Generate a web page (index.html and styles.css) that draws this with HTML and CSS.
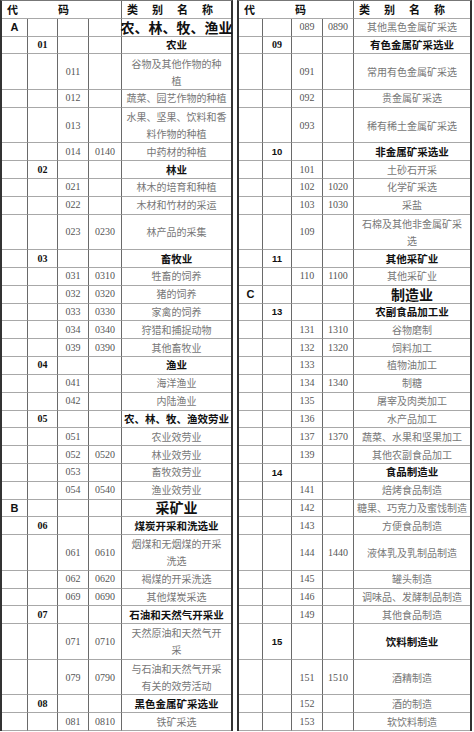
FILE: index.html
```html
<!DOCTYPE html>
<html lang="zh-CN">
<head>
<meta charset="utf-8">
<title>国民经济行业分类</title>
<link rel="stylesheet" href="styles.css">
</head>
<body>
<div class="page">
  <div class="half left">
    <div class="c hc"><span class="h1">代</span><span class="h2">码</span></div><div class="c n hn">类别名称</div>
    <div class="c l">A</div><div class="c"></div><div class="c"></div><div class="c"></div><div class="c n g">农、林、牧、渔业</div>
    <div class="c"></div><div class="c k">01</div><div class="c"></div><div class="c"></div><div class="c n s">农业</div>
    <div class="c d"></div><div class="c d"></div><div class="c d">011</div><div class="c d"></div><div class="c n d">谷物及其他作物的种<br>植</div>
    <div class="c"></div><div class="c"></div><div class="c">012</div><div class="c"></div><div class="c n">蔬菜、园艺作物的种植</div>
    <div class="c d"></div><div class="c d"></div><div class="c d">013</div><div class="c d"></div><div class="c n d">水果、坚果、饮料和香<br>料作物的种植</div>
    <div class="c"></div><div class="c"></div><div class="c">014</div><div class="c">0140</div><div class="c n">中药材的种植</div>
    <div class="c"></div><div class="c k">02</div><div class="c"></div><div class="c"></div><div class="c n s">林业</div>
    <div class="c"></div><div class="c"></div><div class="c">021</div><div class="c"></div><div class="c n">林木的培育和种植</div>
    <div class="c"></div><div class="c"></div><div class="c">022</div><div class="c"></div><div class="c n">木材和竹材的采运</div>
    <div class="c d"></div><div class="c d"></div><div class="c d">023</div><div class="c d">0230</div><div class="c n d">林产品的采集</div>
    <div class="c"></div><div class="c k">03</div><div class="c"></div><div class="c"></div><div class="c n s">畜牧业</div>
    <div class="c"></div><div class="c"></div><div class="c">031</div><div class="c">0310</div><div class="c n">牲畜的饲养</div>
    <div class="c"></div><div class="c"></div><div class="c">032</div><div class="c">0320</div><div class="c n">猪的饲养</div>
    <div class="c"></div><div class="c"></div><div class="c">033</div><div class="c">0330</div><div class="c n">家禽的饲养</div>
    <div class="c"></div><div class="c"></div><div class="c">034</div><div class="c">0340</div><div class="c n">狩猎和捕捉动物</div>
    <div class="c"></div><div class="c"></div><div class="c">039</div><div class="c">0390</div><div class="c n">其他畜牧业</div>
    <div class="c"></div><div class="c k">04</div><div class="c"></div><div class="c"></div><div class="c n s">渔业</div>
    <div class="c"></div><div class="c"></div><div class="c">041</div><div class="c"></div><div class="c n">海洋渔业</div>
    <div class="c"></div><div class="c"></div><div class="c">042</div><div class="c"></div><div class="c n">内陆渔业</div>
    <div class="c"></div><div class="c k">05</div><div class="c"></div><div class="c"></div><div class="c n s">农、林、牧、渔效劳业</div>
    <div class="c"></div><div class="c"></div><div class="c">051</div><div class="c"></div><div class="c n">农业效劳业</div>
    <div class="c"></div><div class="c"></div><div class="c">052</div><div class="c">0520</div><div class="c n">林业效劳业</div>
    <div class="c"></div><div class="c"></div><div class="c">053</div><div class="c"></div><div class="c n">畜牧效劳业</div>
    <div class="c"></div><div class="c"></div><div class="c">054</div><div class="c">0540</div><div class="c n">渔业效劳业</div>
    <div class="c l">B</div><div class="c"></div><div class="c"></div><div class="c"></div><div class="c n g">采矿业</div>
    <div class="c"></div><div class="c k">06</div><div class="c"></div><div class="c"></div><div class="c n s">煤炭开采和洗选业</div>
    <div class="c d"></div><div class="c d"></div><div class="c d">061</div><div class="c d">0610</div><div class="c n d">烟煤和无烟煤的开采<br>洗选</div>
    <div class="c"></div><div class="c"></div><div class="c">062</div><div class="c">0620</div><div class="c n">褐煤的开采洗选</div>
    <div class="c"></div><div class="c"></div><div class="c">069</div><div class="c">0690</div><div class="c n">其他煤炭采选</div>
    <div class="c"></div><div class="c k">07</div><div class="c"></div><div class="c"></div><div class="c n s">石油和天然气开采业</div>
    <div class="c d"></div><div class="c d"></div><div class="c d">071</div><div class="c d">0710</div><div class="c n d">天然原油和天然气开<br>采</div>
    <div class="c d"></div><div class="c d"></div><div class="c d">079</div><div class="c d">0790</div><div class="c n d">与石油和天然气开采<br>有关的效劳活动</div>
    <div class="c"></div><div class="c k">08</div><div class="c"></div><div class="c"></div><div class="c n s">黑色金属矿采选业</div>
    <div class="c"></div><div class="c"></div><div class="c">081</div><div class="c">0810</div><div class="c n">铁矿采选</div>
  </div>
  <div class="half right">
    <div class="c hc"><span class="h1">代</span><span class="h2">码</span></div><div class="c n hn">类别名称</div>
    <div class="c"></div><div class="c"></div><div class="c">089</div><div class="c">0890</div><div class="c n">其他黑色金属矿采选</div>
    <div class="c"></div><div class="c k">09</div><div class="c"></div><div class="c"></div><div class="c n s">有色金属矿采选业</div>
    <div class="c d"></div><div class="c d"></div><div class="c d">091</div><div class="c d"></div><div class="c n d">常用有色金属矿采选</div>
    <div class="c"></div><div class="c"></div><div class="c">092</div><div class="c"></div><div class="c n">贵金属矿采选</div>
    <div class="c d"></div><div class="c d"></div><div class="c d">093</div><div class="c d"></div><div class="c n d">稀有稀土金属矿采选</div>
    <div class="c"></div><div class="c k ks">10</div><div class="c"></div><div class="c"></div><div class="c n s">非金属矿采选业</div>
    <div class="c"></div><div class="c"></div><div class="c">101</div><div class="c"></div><div class="c n">土砂石开采</div>
    <div class="c"></div><div class="c"></div><div class="c">102</div><div class="c">1020</div><div class="c n">化学矿采选</div>
    <div class="c"></div><div class="c"></div><div class="c">103</div><div class="c">1030</div><div class="c n">采盐</div>
    <div class="c d"></div><div class="c d"></div><div class="c d">109</div><div class="c d"></div><div class="c n d">石棉及其他非金属矿采<br>选</div>
    <div class="c"></div><div class="c k ks">11</div><div class="c"></div><div class="c"></div><div class="c n s">其他采矿业</div>
    <div class="c"></div><div class="c"></div><div class="c">110</div><div class="c">1100</div><div class="c n">其他采矿业</div>
    <div class="c l">C</div><div class="c"></div><div class="c"></div><div class="c"></div><div class="c n g">制造业</div>
    <div class="c"></div><div class="c k ks">13</div><div class="c"></div><div class="c"></div><div class="c n s">农副食品加工业</div>
    <div class="c"></div><div class="c"></div><div class="c">131</div><div class="c">1310</div><div class="c n">谷物磨制</div>
    <div class="c"></div><div class="c"></div><div class="c">132</div><div class="c">1320</div><div class="c n">饲料加工</div>
    <div class="c"></div><div class="c"></div><div class="c">133</div><div class="c"></div><div class="c n">植物油加工</div>
    <div class="c"></div><div class="c"></div><div class="c">134</div><div class="c">1340</div><div class="c n">制糖</div>
    <div class="c"></div><div class="c"></div><div class="c">135</div><div class="c"></div><div class="c n">屠宰及肉类加工</div>
    <div class="c"></div><div class="c"></div><div class="c">136</div><div class="c"></div><div class="c n">水产品加工</div>
    <div class="c"></div><div class="c"></div><div class="c">137</div><div class="c">1370</div><div class="c n">蔬菜、水果和坚果加工</div>
    <div class="c"></div><div class="c"></div><div class="c">139</div><div class="c"></div><div class="c n">其他农副食品加工</div>
    <div class="c"></div><div class="c k ks">14</div><div class="c"></div><div class="c"></div><div class="c n s">食品制造业</div>
    <div class="c"></div><div class="c"></div><div class="c">141</div><div class="c"></div><div class="c n">焙烤食品制造</div>
    <div class="c"></div><div class="c"></div><div class="c">142</div><div class="c"></div><div class="c n">糖果、巧克力及蜜饯制造</div>
    <div class="c"></div><div class="c"></div><div class="c">143</div><div class="c"></div><div class="c n">方便食品制造</div>
    <div class="c d"></div><div class="c d"></div><div class="c d">144</div><div class="c d">1440</div><div class="c n d">液体乳及乳制品制造</div>
    <div class="c"></div><div class="c"></div><div class="c">145</div><div class="c"></div><div class="c n">罐头制造</div>
    <div class="c"></div><div class="c"></div><div class="c">146</div><div class="c"></div><div class="c n">调味品、发酵制品制造</div>
    <div class="c"></div><div class="c"></div><div class="c">149</div><div class="c"></div><div class="c n">其他食品制造</div>
    <div class="c d"></div><div class="c d k ks">15</div><div class="c d"></div><div class="c d"></div><div class="c n d s">饮料制造业</div>
    <div class="c d"></div><div class="c d"></div><div class="c d">151</div><div class="c d">1510</div><div class="c n d">酒精制造</div>
    <div class="c"></div><div class="c"></div><div class="c">152</div><div class="c"></div><div class="c n">酒的制造</div>
    <div class="c"></div><div class="c"></div><div class="c">153</div><div class="c"></div><div class="c n">软饮料制造</div>
  </div>
</div>
</body>
</html>
```
FILE: styles.css
```css
html, body {
  margin: 0;
  padding: 0;
  background: #fff;
}

.page {
  display: flex;
  gap: 4px;
  width: 474px;
  height: 732px;
  overflow: hidden;
}

.half {
  display: grid;
  grid-template-rows: repeat(41, 1fr);
  height: 731px;
  box-sizing: border-box;
  border-top: 1px solid #777;
  border-left: 2px solid #333;
  border-right: 2px solid #333;
}

.left {
  width: 233px;
  grid-template-columns: 26px 30px 31px 33px 1fr;
}

.right {
  width: 235px;
  grid-template-columns: 24px 29px 31px 31px 1fr;
}

.c {
  display: flex;
  align-items: center;
  justify-content: center;
  min-width: 0;
  overflow: hidden;
  white-space: nowrap;
  border-right: 1px solid #6a6a6a;
  border-bottom: 1px solid #a8a8a8;
  font: 10px/1 "Liberation Serif", serif;
  color: #555;
}

.n {
  border-right: 0;
  font-family: "Noto Sans CJK SC", sans-serif;
  font-size: 10px;
  line-height: 16px;
  color: #777;
  text-align: center;
}

.d {
  grid-row: span 2;
  line-height: 17px;
}

.s {
  font-weight: bold;
  font-size: 10.5px;
  color: #111;
}

.g {
  overflow: visible;
  font-weight: bold;
  font-size: 14px;
  line-height: 15px;
  color: #111;
}

.k {
  font-weight: bold;
  color: #111;
}

.ks {
  font-family: "Liberation Sans", sans-serif;
  font-size: 9.5px;
}

.l {
  font: bold 11px "Liberation Sans", sans-serif;
  color: #111;
}

.hc {
  grid-column: span 4;
  justify-content: flex-start;
  padding-left: 5px;
  font: bold 11px/1 "Noto Sans CJK SC", sans-serif;
  color: #111;
}

.h2 {
  margin-left: 40px;
}

.hn {
  justify-content: flex-start;
  padding-left: 5px;
  font-weight: bold;
  font-size: 11px;
  line-height: 1;
  letter-spacing: 14px;
  color: #111;
}
```
